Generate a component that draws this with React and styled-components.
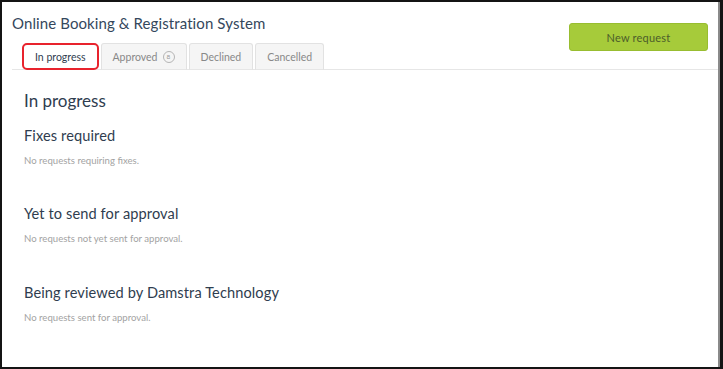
import React from "react";
import styled, { createGlobalStyle } from "styled-components";

const GlobalStyle = createGlobalStyle`
  html, body {
    margin: 0;
    padding: 0;
    background: #ffffff;
  }
  * {
    box-sizing: border-box;
  }
`;

const Frame = styled.div`
  width: 723px;
  height: 369px;
  border: 2px solid #141414;
  border-right-width: 3px;
  box-shadow: inset -2px 0 0 #8a8a8a;
  background: #ffffff;
  font-family: "Lato", "Open Sans", sans-serif;
  overflow: hidden;
`;

const Header = styled.div`
  display: flex;
  justify-content: space-between;
  margin-left: 10px;
  margin-right: 2px;
  border-bottom: 1px solid #e6e6e6;
`;

const HeaderLeft = styled.div`
  display: flex;
  flex-direction: column;
`;

const Title = styled.h1`
  margin: 11px 0 0 0;
  font-size: 15px;
  font-weight: 400;
  color: #34475c;
  line-height: 20px;
  letter-spacing: 0.1px;
`;

const Tabs = styled.div`
  display: flex;
  gap: 2px;
  margin: 10px 0 -1px 10px;
`;

const Tab = styled.div`
  display: flex;
  align-items: center;
  gap: 5px;
  height: 27px;
  padding: 0 11px;
  font-size: 10.5px;
  color: ${(p) => (p.active ? "#2f3d4f" : "#888888")};
  background: ${(p) => (p.active ? "#ffffff" : "#f5f5f5")};
  border: ${(p) => (p.active ? "2px solid #e8232d" : "1px solid #e2e2e2")};
  border-bottom: ${(p) => (p.active ? "2px solid #e8232d" : "1px solid #e6e6e6")};
  border-radius: ${(p) => (p.active ? "5px" : "3px 3px 0 0")};
`;

const Badge = styled.span`
  display: inline-flex;
  align-items: center;
  justify-content: center;
  width: 12px;
  height: 12px;
  border: 1px solid #b5b5b5;
  border-radius: 50%;
  font-size: 6.5px;
  color: #9a9a9a;
`;

const NewButton = styled.button`
  margin: 21px 10px 0 0;
  width: 139px;
  height: 28px;
  background: #a6cb3a;
  border: 1px solid #98bd30;
  border-radius: 3px;
  color: #4c5d2a;
  font-family: "Lato", "Open Sans", sans-serif;
  font-size: 11px;
  letter-spacing: 0.2px;
`;

const Content = styled.div`
  padding: 20px 0 0 22px;
`;

const PageHeading = styled.h2`
  margin: 0;
  font-size: 17px;
  font-weight: 400;
  color: #2f3d4f;
  line-height: 22px;
`;

const Section = styled.div`
  margin-top: ${(p) => p.gap}px;
`;

const SectionTitle = styled.h3`
  margin: 0;
  font-size: 14.6px;
  font-weight: 400;
  color: #2f3d4f;
  line-height: 18px;
  letter-spacing: 0.1px;
`;

const Empty = styled.p`
  margin: 10px 0 0 0;
  font-size: 9.6px;
  font-weight: 400;
  color: #a3a3a3;
  line-height: 12px;
`;

const tabs = [
  { label: "In progress", active: true },
  { label: "Approved", badge: "8" },
  { label: "Declined" },
  { label: "Cancelled" },
];

const sections = [
  { title: "Fixes required", empty: "No requests requiring fixes.", gap: 15 },
  { title: "Yet to send for approval", empty: "No requests not yet sent for approval.", gap: 38 },
  { title: "Being reviewed by Damstra Technology", empty: "No requests sent for approval.", gap: 39 },
];

export default function App() {
  return (
    <>
      <GlobalStyle />
      <Frame>
        <Header>
          <HeaderLeft>
            <Title>Online Booking &amp; Registration System</Title>
            <Tabs>
              {tabs.map((t) => (
                <Tab key={t.label} active={t.active}>
                  {t.label}
                  {t.badge && <Badge>{t.badge}</Badge>}
                </Tab>
              ))}
            </Tabs>
          </HeaderLeft>
          <NewButton>New request</NewButton>
        </Header>
        <Content>
          <PageHeading>In progress</PageHeading>
          {sections.map((s) => (
            <Section key={s.title} gap={s.gap}>
              <SectionTitle>{s.title}</SectionTitle>
              <Empty>{s.empty}</Empty>
            </Section>
          ))}
        </Content>
      </Frame>
    </>
  );
}
